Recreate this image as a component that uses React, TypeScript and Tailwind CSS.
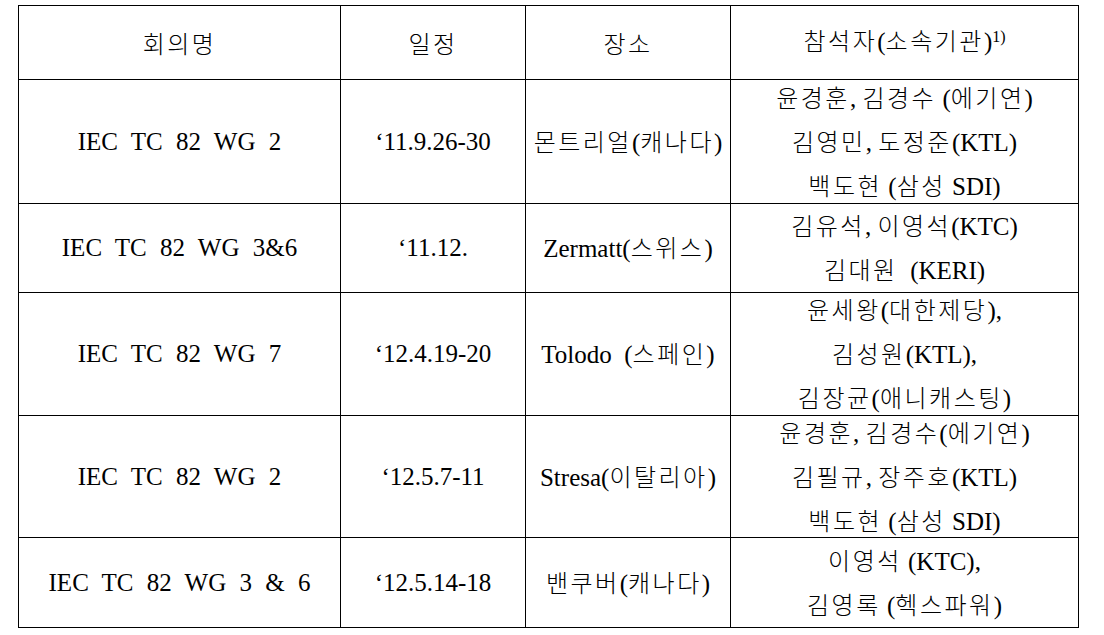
const rows = [
  {
    name: 'IEC TC 82 WG 2',
    date: '‘11.9.26-30',
    place: '몬트리얼(캐나다)',
    people: ['윤경훈, 김경수 (에기연)', '김영민, 도정준(KTL)', '백도현 (삼성 SDI)'],
    h: 'h-[124px]',
  },
  {
    name: 'IEC TC 82 WG 3&6',
    date: '‘11.12.',
    place: 'Zermatt(스위스)',
    people: ['김유석, 이영석(KTC)', '김대원  (KERI)'],
    h: 'h-[89px]',
  },
  {
    name: 'IEC TC 82 WG 7',
    date: '‘12.4.19-20',
    place: 'Tolodo  (스페인)',
    people: ['윤세왕(대한제당),', '김성원(KTL),', '김장균(애니캐스팅)'],
    h: 'h-[123px]',
  },
  {
    name: 'IEC TC 82 WG 2',
    date: '‘12.5.7-11',
    place: 'Stresa(이탈리아)',
    people: ['윤경훈, 김경수(에기연)', '김필규, 장주호(KTL)', '백도현 (삼성 SDI)'],
    h: 'h-[122px]',
  },
  {
    name: 'IEC TC 82 WG 3 & 6',
    date: '‘12.5.14-18',
    place: '밴쿠버(캐나다)',
    people: ['이영석 (KTC),', '김영록 (헥스파워)'],
    h: 'h-[90px]',
  },
]

const cell = 'flex flex-col items-center justify-center border-r border-b border-black text-center whitespace-pre'

// Hangul runs get the CJK font, everything else stays in the serif
function Mixed({ text }: { text: string }) {
  return (
    <>
      {text.split(/([\uAC00-\uD7A3]+)/).map((part, i) =>
        /[\uAC00-\uD7A3]/.test(part) ? (
          <span key={i} className="font-['Noto_Sans_CJK_KR',sans-serif] text-[24px] font-light tracking-[2.5px]">
            {part}
          </span>
        ) : (
          <span key={i}>{part}</span>
        ),
      )}
    </>
  )
}

export default function App() {
  return (
    <div className="min-h-[635px] bg-white pl-[18px] pt-[5px] font-['Liberation_Serif',serif] text-[25px] leading-[30px] text-black">
      <div className="grid w-[1061px] grid-cols-[322px_185px_205px_348px] border-t border-l border-black">
        <div className={`${cell} h-[74px]`}>
          <Mixed text="회의명" />
        </div>
        <div className={`${cell} h-[74px]`}>
          <Mixed text="일정" />
        </div>
        <div className={`${cell} h-[74px]`}>
          <Mixed text="장소" />
        </div>
        <div className={`${cell} h-[74px]`}>
          <span>
            <Mixed text="참석자(소속기관)" />
            <span className="relative -top-[8px] text-[16px]">1)</span>
          </span>
        </div>

        {rows.map((r, i) => (
          <div key={i} className="contents">
            <div className={`${cell} ${r.h} [word-spacing:7px]`}>{r.name}</div>
            <div className={`${cell} ${r.h}`}>{r.date}</div>
            <div className={`${cell} ${r.h}`}>
              <span>
                <Mixed text={r.place} />
              </span>
            </div>
            <div className={`${cell} ${r.h} gap-[12px]`}>
              {r.people.map((p) => (
                <div key={p}>
                  <Mixed text={p} />
                </div>
              ))}
            </div>
          </div>
        ))}
      </div>
    </div>
  )
}
